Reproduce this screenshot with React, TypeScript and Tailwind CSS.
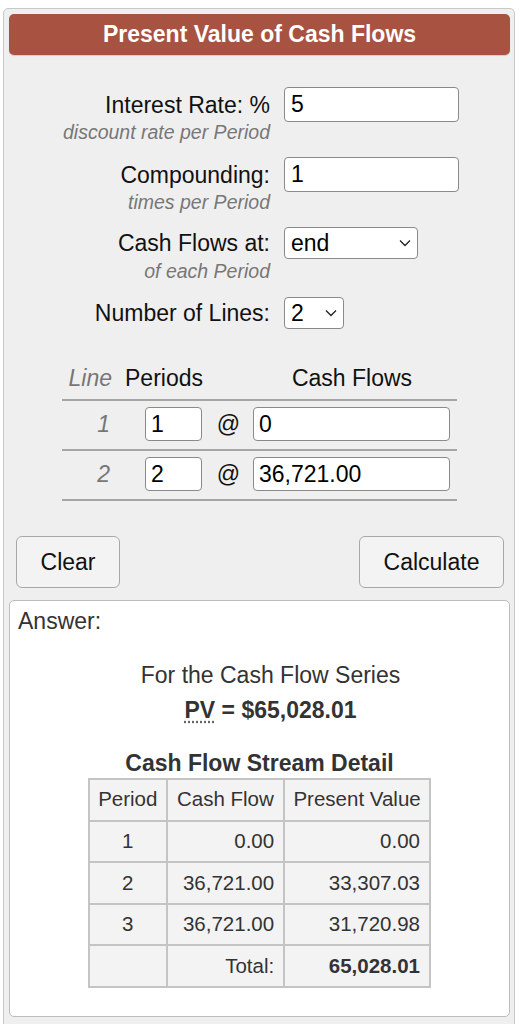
import React from "react";

const font = { fontFamily: '"Liberation Sans", Arial, sans-serif' };

function Chevron() {
  return (
    <svg
      width="12"
      height="8"
      viewBox="0 0 12 8"
      className="pointer-events-none absolute right-[7px] top-1/2 -translate-y-1/2"
    >
      <path d="M1 1.5 L6 6.5 L11 1.5" fill="none" stroke="#222" strokeWidth="1.3" />
    </svg>
  );
}

function Field({
  label,
  hint,
  children,
  className,
}: {
  label: string;
  hint?: string;
  children: React.ReactNode;
  className?: string;
}) {
  return (
    <div className={"grid grid-cols-[261px_auto] gap-x-[14px] " + (className ?? "")}>
      <div className="flex items-center justify-end whitespace-nowrap text-[23px] leading-[28px] text-[#111]">{label}</div>
      <div className="flex items-center">{children}</div>
      {hint ? (
        <div className="whitespace-nowrap text-right text-[19.5px] italic text-[#777] leading-[20px]">{hint}</div>
      ) : null}
    </div>
  );
}

const inputCls =
  "h-[35px] w-[175px] rounded-[4px] border border-[#8a8a8a] bg-white px-[6px] text-[23px] leading-[28px] text-black outline-none";

export default function App() {
  return (
    <div style={font} className="min-h-screen bg-white pt-[8px] pl-[3px]">
      <div className="w-[512px] rounded-[5px] border border-[#c8c8c8] bg-[#efefef] pl-[5px] pr-[4px] pt-[5px] pb-[20px]">
        <div className="flex h-[41px] items-center justify-center rounded-[5px] bg-[#a85241] text-[23px] font-bold text-white shadow-[0_1px_1px_rgba(0,0,0,0.15)]">
          Present Value of Cash Flows
        </div>

        <Field label="Interest Rate: %" hint="discount rate per Period" className="mt-[32px]">
          <input readOnly value="5" className={inputCls} />
        </Field>

        <Field label="Compounding:" hint="times per Period" className="mt-[15px]">
          <input readOnly value="1" className={inputCls} />
        </Field>

        <Field label="Cash Flows at:" className="mt-[15px]">
          <div className="relative">
            <select
              defaultValue="end"
              className="h-[32px] w-[134px] appearance-none rounded-[4px] border border-[#8a8a8a] bg-white pl-[6px] text-[23px] leading-[28px] text-black outline-none"
            >
              <option value="end">end</option>
              <option value="beginning">beginning</option>
            </select>
            <Chevron />
          </div>
        </Field>
        <div className="mt-[2px] w-[261px] whitespace-nowrap text-right text-[19.5px] italic leading-[20px] text-[#777]">
          of each Period
        </div>

        <Field label="Number of Lines:" className="mt-[16px]">
          <div className="relative">
            <select
              defaultValue="2"
              className="h-[32px] w-[60px] appearance-none rounded-[4px] border border-[#8a8a8a] bg-white pl-[6px] text-[23px] leading-[28px] text-black outline-none"
            >
              <option value="1">1</option>
              <option value="2">2</option>
              <option value="3">3</option>
            </select>
            <Chevron />
          </div>
        </Field>

        <div className="ml-[53px] mt-[33px] w-[395px] text-[23px] leading-[28px]">
          <div className="grid h-[39px] grid-cols-[56px_92px_37px_1fr] items-center border-b-[2px] border-[#a6a6a6] pb-[5px]">
            <div className="pr-[6px] text-right italic text-[#777]">Line</div>
            <div className="pl-[7px] text-[#111]">Periods</div>
            <div />
            <div className="text-center text-[#111]">Cash Flows</div>
          </div>
          {[
            { n: "1", p: "1", c: "0" },
            { n: "2", p: "2", c: "36,721.00" },
          ].map((r) => (
            <div
              key={r.n}
              className="grid grid-cols-[56px_92px_37px_1fr] items-center border-b-[2px] border-[#a6a6a6] pt-[6px] pb-[8px]"
            >
              <div className="pr-[8px] text-right italic text-[#777]">{r.n}</div>
              <div className="flex justify-end pr-[8px]">
                <input
                  readOnly
                  value={r.p}
                  className="h-[34px] w-[57px] rounded-[4px] border border-[#8a8a8a] bg-white px-[5px] text-[23px] leading-[28px] text-black outline-none"
                />
              </div>
              <div className="text-center text-[#111]">@</div>
              <div className="pl-[6px] pr-[7px]">
                <input
                  readOnly
                  value={r.c}
                  className="block h-[34px] w-full rounded-[4px] border border-[#8a8a8a] bg-white px-[5px] text-[23px] leading-[28px] text-black outline-none"
                />
              </div>
            </div>
          ))}
        </div>

        <div className="mt-[35px] flex justify-between pl-[7px] pr-[6px]">
          <button className="h-[52px] w-[104px] rounded-[6px] border border-[#a8a8a8] bg-[#f3f3f3] text-[23px] text-[#111]">
            Clear
          </button>
          <button className="h-[52px] w-[145px] rounded-[6px] border border-[#a8a8a8] bg-[#f3f3f3] text-[23px] text-[#111]">
            Calculate
          </button>
        </div>

        <div className="mt-[12px] rounded-[5px] border border-[#bdbdbd] bg-white pb-[28px] pt-[7px] text-[#333]">
          <div className="pl-[8px] text-[23px] leading-[26px]">Answer:</div>
          <div className="mt-[28px] pl-[22px] text-center text-[23px] leading-[26px]">
            For the Cash Flow Series
          </div>
          <div className="mt-[9px] pl-[22px] text-center text-[23px] font-bold leading-[26px]">
            <abbr title="Present Value" className="underline decoration-dotted decoration-[#666] underline-offset-[3px]">
              PV
            </abbr>{" "}
            = $65,028.01
          </div>
          <div className="mt-[27px] text-center text-[23px] font-bold leading-[26px]">
            Cash Flow Stream Detail
          </div>
          <table className="mx-auto mt-[2px] w-[343px] border-collapse text-[20.5px]">
            <colgroup>
              <col className="w-[78px]" />
              <col className="w-[118px]" />
              <col className="w-[147px]" />
            </colgroup>
            <tbody>
              <tr className="h-[41.6px]">
                <td className="border-2 border-[#c4c4c4] bg-[#f3f3f3] text-center">Period</td>
                <td className="border-2 border-[#c4c4c4] bg-[#f3f3f3] text-center">Cash Flow</td>
                <td className="border-2 border-[#c4c4c4] bg-[#f3f3f3] text-center">Present Value</td>
              </tr>
              {[
                ["1", "0.00", "0.00"],
                ["2", "36,721.00", "33,307.03"],
                ["3", "36,721.00", "31,720.98"],
              ].map((r) => (
                <tr key={r[0]} className="h-[41.6px]">
                  <td className="border-2 border-[#c4c4c4] bg-[#f3f3f3] text-center">{r[0]}</td>
                  <td className="border-2 border-[#c4c4c4] bg-[#f3f3f3] pr-[9px] text-right">{r[1]}</td>
                  <td className="border-2 border-[#c4c4c4] bg-[#f3f3f3] pr-[9px] text-right">{r[2]}</td>
                </tr>
              ))}
              <tr className="h-[41.6px]">
                <td className="border-2 border-[#c4c4c4] bg-[#f3f3f3]"></td>
                <td className="border-2 border-[#c4c4c4] bg-[#f3f3f3] pr-[9px] text-right">Total:</td>
                <td className="border-2 border-[#c4c4c4] bg-[#f3f3f3] pr-[9px] text-right font-bold">
                  65,028.01
                </td>
              </tr>
            </tbody>
          </table>
        </div>
      </div>
    </div>
  );
}
